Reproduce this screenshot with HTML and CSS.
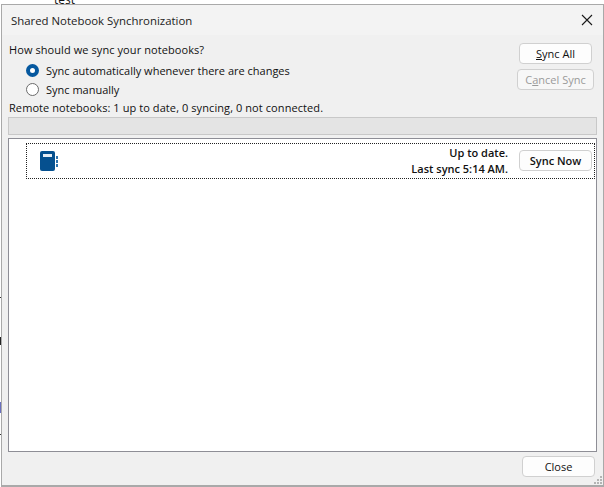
FILE: index.html
```html
<!DOCTYPE html>
<html lang="en">
<head>
    <meta charset="UTF-8">
    <meta name="viewport" content="width=device-width, initial-scale=1.0">
    <title>Shared Notebook Synchronization</title>
    <link rel="stylesheet" href="styles.css">
</head>
<body>

<!-- Bits of the window behind the dialog -->
<div class="behind"><span>test</span></div>
<svg class="behind-edge" width="1" height="487" viewBox="0 0 1 487">
    <rect y="297" width="1" height="1" fill="#333"/>
    <rect y="337" width="1" height="8" fill="#222"/>
    <rect y="402" width="1" height="11" fill="#6a6fc0"/>
    <rect y="434" width="1" height="1" fill="#333"/>
</svg>

<div class="dialog">

    <!-- Title bar -->
    <div class="titlebar">
        <span class="title">Shared Notebook Synchronization</span>
        <svg class="close-x" width="12" height="12" viewBox="0 0 12 12">
            <path d="M1 1 L11 11 M11 1 L1 11" stroke="#1a1a1a" stroke-width="1.1" fill="none"/>
        </svg>
    </div>

    <div class="content">

        <!-- Options and top buttons -->
        <div class="top-row">
            <div class="options">
                <div class="question">How should we sync your notebooks?</div>
                <div class="radio-row">
                    <span class="radio checked"></span>
                    <span>Sync automatically whenever there are changes</span>
                </div>
                <div class="radio-row">
                    <span class="radio"></span>
                    <span>Sync manually</span>
                </div>
            </div>
            <div class="top-buttons">
                <button class="btn btn-sync-all"><u>S</u>ync All</button>
                <button class="btn btn-cancel" disabled>C<u>a</u>ncel Sync</button>
            </div>
        </div>

        <div class="status">Remote notebooks: 1 up to date, 0 syncing, 0 not connected.</div>
        <div class="progress"></div>

        <!-- Notebook list -->
        <div class="list">
            <div class="notebook">
                <svg class="notebook-icon" width="19" height="20" viewBox="0 0 19 20">
                    <rect x="0" y="0" width="15" height="20" rx="2" fill="#05508f"/>
                    <rect x="3" y="3" width="9" height="3" fill="#e6edf4"/>
                    <rect x="16" y="5" width="2" height="3" fill="#2f74ad"/>
                    <rect x="16" y="9" width="2" height="3" fill="#2f74ad"/>
                    <rect x="16" y="13" width="2" height="3" fill="#2f74ad"/>
                </svg>
                <div class="sync-info">
                    <div>Up to date.</div>
                    <div>Last sync 5:14 AM.</div>
                </div>
                <button class="btn btn-sync-now">Sync Now</button>
            </div>
        </div>

        <div class="footer">
            <button class="btn btn-close">Close</button>
        </div>
    </div>

    <svg class="grip" width="10" height="10" viewBox="0 0 10 10">
        <path d="M7 1h2v2H7z M4 4h2v2H4z M7 4h2v2H7z M1 7h2v2H1z M4 7h2v2H4z M7 7h2v2H7z" fill="#b4b4b4"/>
    </svg>
</div>

</body>
</html>
```

FILE: styles.css
```css
html, body { margin: 0; padding: 0; }
body { position: relative; width: 604px; height: 487px; overflow: hidden; background: white; font-family: "Open Sans", "Noto Sans", sans-serif; font-size: 11px; color: #111; }

.behind { height: 4px; overflow: hidden; padding-left: 54px; font-size: 12px; line-height: 12px; }
.behind span { display: block; margin-top: -6px; }
.behind-edge { position: absolute; left: 0; top: 0; }

.dialog { position: relative; box-sizing: border-box; margin-left: 1px; width: 603px; height: 483px; border: 1px solid #a9a9a9; border-width: 1px 1px 2px 1px; background: #f0f0f0; }

.titlebar { display: flex; justify-content: space-between; align-items: center; height: 30px; padding: 0 10px 0 9px; background: #f3f3f3; }
.title { font-size: 11.4px; color: #222; }
.close-x { display: block; }

.content { display: flex; flex-direction: column; padding: 0 6px 0 6px; height: 450px; }

.top-row { display: flex; justify-content: space-between; height: 59px; padding-top: 6px; }
.question { line-height: 17px; margin-left: 1px; letter-spacing: .08px; margin-bottom: 3px; }
.radio-row { display: flex; align-items: center; gap: 7px; height: 19px; margin-left: 18px; }
.radio { box-sizing: border-box; width: 13px; height: 13px; border: 1px solid #6b6b6b; border-radius: 50%; background: white; }
.radio.checked { border: 4px solid #05589f; }

.top-buttons { display: flex; flex-direction: column; align-items: center; gap: 5px; margin-top: 2px; margin-right: 3px; }

.btn { box-sizing: border-box; height: 21px; padding: 0; border: 1px solid #d0d0d0; border-radius: 4px; background: #fdfdfd; font: inherit; color: #111; text-align: center; }
.btn-sync-all { width: 73px; }
.btn-cancel { width: 77px; color: #9a9a9a; background: #f7f7f7; }
.btn-sync-now { width: 73px; font-weight: 600; margin-left: 11px; margin-bottom: 1px; }
.btn-close { width: 73px; margin-right: 2px; }

.status { margin-left: 1px; line-height: 15px; white-space: nowrap; letter-spacing: .08px; }

.progress { box-sizing: border-box; height: 18px; margin-top: 2px; background: #e4e4e4; border: 1px solid #c8c8c8; }

.list { box-sizing: border-box; flex: 1; margin-top: 3px; padding: 4px 1px 0 17px; background: white; border: 1px solid #8e8e96; }

.notebook { display: flex; align-items: center; box-sizing: border-box; height: 36px; padding: 0 2px 0 13px; border: 1px dotted #222; }
.notebook-icon { display: block; }
.sync-info { flex: 1; text-align: right; font-weight: 600; line-height: 16px; }

.footer { display: flex; justify-content: flex-end; align-items: flex-start; height: 33px; padding-top: 4px; box-sizing: border-box; }

.grip { position: absolute; right: 0; bottom: 0; }
```
